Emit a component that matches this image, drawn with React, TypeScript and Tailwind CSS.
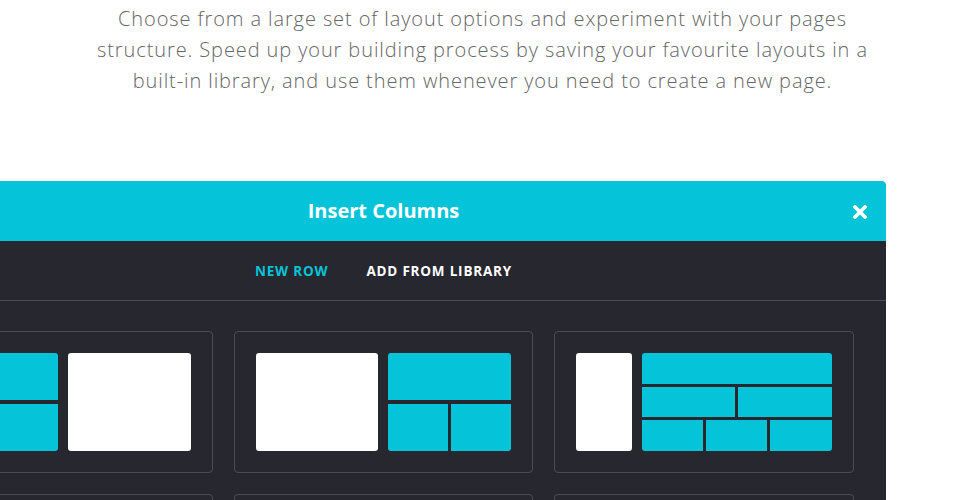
import React from "react";

const CYAN = "bg-[#05c4d9]";

const Card = ({ children }: { children: React.ReactNode }) => (
  <div className="h-[142px] rounded-[4px] border border-[#4b4b52] p-[21px]">
    <div className="flex h-[98px] gap-[10px]">{children}</div>
  </div>
);

const Cell = ({ className }: { className: string }) => (
  <div className={`${CYAN} ${className}`} />
);

export default function App() {
  return (
    <div className="h-[500px] w-[965px] overflow-hidden bg-white">
      <p className="pt-[3px] text-center text-[20px] font-light leading-[31px] tracking-[0.9px] text-[#666666] [font-family:'Open_Sans',sans-serif]">
        Choose from a large set of layout options and experiment with your pages
        <br />
        structure. Speed up your building process by saving your favourite layouts in a
        <br />
        built-in library, and use them whenever you need to create a new page.
      </p>

      <div className="ml-[-118.5px] mt-[85px] w-[1004px] rounded-t-[5px] bg-[#27272f] [font-family:'Open_Sans',sans-serif]">
        {/* header */}
        <div className={`grid h-[60px] grid-cols-[1fr_auto_1fr] items-center rounded-t-[5px] ${CYAN}`}>
          <div />
          <h2 className="text-[20px] font-bold text-white">Insert Columns</h2>
          <div className="flex justify-end pr-[19px] pt-[2px]">
            <svg width="14" height="14" viewBox="0 0 14 14">
              <path d="M2 2L12 12M12 2L2 12" stroke="white" strokeWidth="3.6" strokeLinecap="square" />
            </svg>
          </div>
        </div>

        {/* tabs */}
        <div className="flex h-[60px] items-center justify-center gap-[38px] border-b border-[#4b4b52] pt-[2px]">
          <span className="text-[13.5px] font-bold tracking-[0.8px] text-[#05c4d9]">NEW ROW</span>
          <span className="text-[13.5px] font-bold tracking-[0.8px] text-white">ADD FROM LIBRARY</span>
        </div>

        {/* layouts */}
        <div className="grid grid-cols-3 gap-[21px] px-[32px] pt-[30px] pb-[30px]">
          <Card>
            <div className="flex w-[123px] flex-col gap-[4px]">
              <Cell className="flex-1 rounded-t-[3px]" />
              <Cell className="flex-1 rounded-b-[3px]" />
            </div>
            <div className="w-[123px] rounded-[3px] bg-white" />
          </Card>

          <Card>
            <div className="w-[123px] rounded-[3px] bg-white" />
            <div className="flex w-[123px] flex-col gap-[4px]">
              <Cell className="flex-1 rounded-t-[3px]" />
              <div className="flex flex-1 gap-[3px]">
                <Cell className="flex-1 rounded-bl-[3px]" />
                <Cell className="flex-1 rounded-br-[3px]" />
              </div>
            </div>
          </Card>

          <Card>
            <div className="w-[56px] rounded-[3px] bg-white" />
            <div className="flex w-[190px] flex-col gap-[3px]">
              <Cell className="flex-1 rounded-t-[3px]" />
              <div className="flex flex-1 gap-[3px]">
                <Cell className="flex-1" />
                <Cell className="flex-1" />
              </div>
              <div className="flex flex-1 gap-[3px]">
                <Cell className="flex-1 rounded-bl-[3px]" />
                <Cell className="flex-1" />
                <Cell className="flex-1 rounded-br-[3px]" />
              </div>
            </div>
          </Card>

          <Card>
            <div className="w-[123px] rounded-[3px] bg-white" />
          </Card>
          <Card>
            <div className="w-[123px] rounded-[3px] bg-white" />
          </Card>
          <Card>
            <div className="w-[123px] rounded-[3px] bg-white" />
          </Card>
        </div>
      </div>
    </div>
  );
}
